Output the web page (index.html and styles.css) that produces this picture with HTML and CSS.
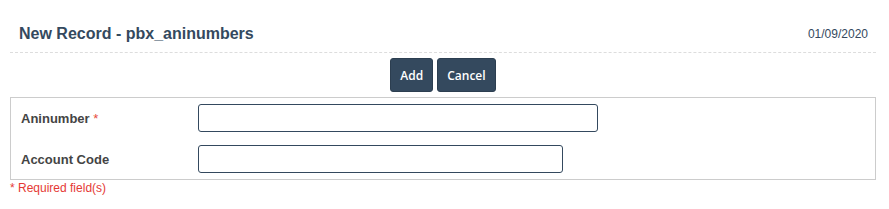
FILE: index.html
```html
<!DOCTYPE html>
<html lang="en">
<head>
  <meta charset="UTF-8">
  <title>New Record - pbx_aninumbers</title>
  <link rel="stylesheet" href="styles.css">
</head>
<body>

<div class="page">
  <div class="header">
    <h2 class="title">New Record - pbx_aninumbers</h2>
    <span class="date">01/09/2020</span>
  </div>

  <!-- form buttons -->
  <div class="button-container">
    <button class="btn">Add</button>
    <button class="btn">Cancel</button>
  </div>

  <div class="form-box">
    <div class="form-row">
      <label for="aninumber">Aninumber <span class="req">*</span></label>
      <input id="aninumber" class="field field-wide" type="text">
    </div>
    <div class="form-row">
      <label for="account_code">Account Code</label>
      <input id="account_code" class="field" type="text">
    </div>
  </div>

  <p class="note">* Required field(s)</p>
</div>

</body>
</html>
```

FILE: styles.css
```css
body { margin: 0; font-family: "Liberation Sans", Arial, sans-serif; background-color: #fff; }

.page { padding: 0 13px 0 10px; }

.header {
  display: flex;
  justify-content: space-between;
  align-items: center;
  padding: 24px 8px 8px 9px;
  border-bottom: 1px dashed #ddd;
}
.title {
  margin: 0;
  font-size: 16px;
  line-height: 20px;
  font-weight: bold;
  color: #34495e;
}
.date { font-size: 12px; color: #34495e; }

.button-container {
  margin-top: 5px;
  text-align: center;
  font-size: 0;
}
.btn {
  height: 34px;
  margin: 0 2px;
  padding: 0 9px;
  font-family: "Open Sans", "Liberation Sans", sans-serif;
  font-size: 12px;
  font-weight: 600;
  color: white;
  background-color: #34495e;
  border: 1px solid #2c3e50;
  border-radius: 3px;
  cursor: pointer;
}

.form-box {
  margin-top: 5px;
  padding: 6px 10px;
  border: 1px solid #ccc;
  display: flex;
  flex-direction: column;
  gap: 13px;
}
.form-row { display: flex; align-items: center; }
.form-row label {
  width: 177px;
  font-size: 13px;
  font-weight: bold;
  color: #444;
}
.req { color: #e74c3c; font-weight: normal; }

.field {
  box-sizing: border-box;
  width: 365px;
  height: 28px;
  border: 1px solid #34495e;
  border-radius: 3px;
}
.field-wide { width: 400px; }

.note {
  margin: 1px 0 0;
  font-size: 12px;
  line-height: 14px;
  color: #e53935;
}
```
